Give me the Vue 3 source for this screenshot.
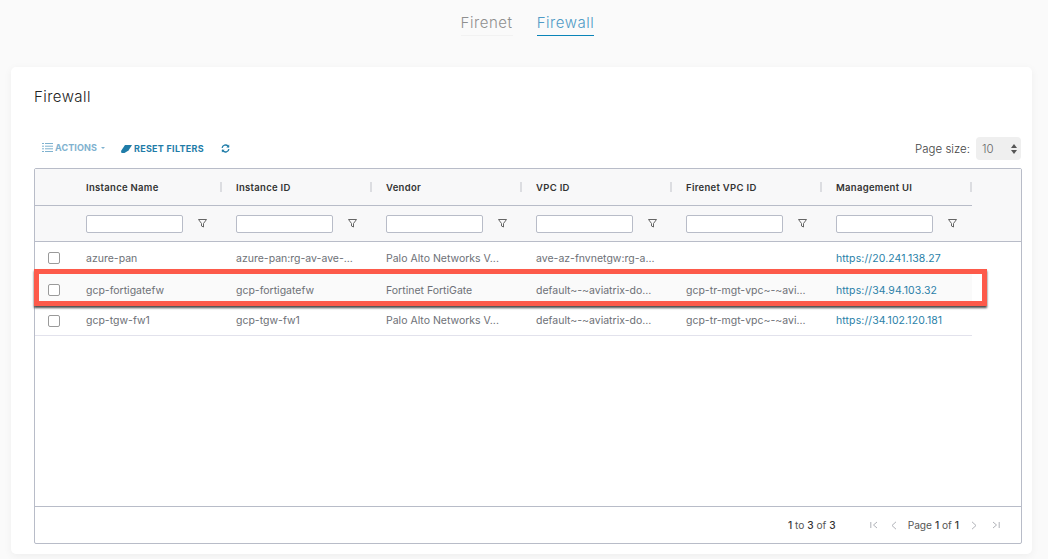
<script setup>
const columns = ['Instance Name', 'Instance ID', 'Vendor', 'VPC ID', 'Firenet VPC ID', 'Management UI']
const rows = [
  { name: 'azure-pan', id: 'azure-pan:rg-av-ave-...', vendor: 'Palo Alto Networks V...', vpc: 'ave-az-fnvnetgw:rg-a...', firenet: '', url: 'https://20.241.138.27' },
  { name: 'gcp-fortigatefw', id: 'gcp-fortigatefw', vendor: 'Fortinet FortiGate', vpc: 'default~-~aviatrix-do...', firenet: 'gcp-tr-mgt-vpc~-~avi...', url: 'https://34.94.103.32' },
  { name: 'gcp-tgw-fw1', id: 'gcp-tgw-fw1', vendor: 'Palo Alto Networks V...', vpc: 'default~-~aviatrix-do...', firenet: 'gcp-tr-mgt-vpc~-~avi...', url: 'https://34.102.120.181' }
]
</script>

<template>
  <div class="page">
    <nav class="tabs">
      <a class="tab">Firenet</a>
      <a class="tab active">Firewall</a>
    </nav>
    <section class="card">
      <h1 class="title">Firewall</h1>
      <div class="toolbar">
        <button class="tool muted">
          <svg width="11" height="9" viewBox="0 0 11 9"><path d="M0 .5h2M3 .5h8M0 3.200h2M3 3.200h8M0 5.800h2M3 5.800h8M0 8.500h2M3 8.500h8" stroke="currentColor" fill="none"/></svg>
          ACTIONS
          <span class="caret"></span>
        </button>
        <button class="tool reset">
          <svg width="11" height="8" viewBox="0 0 11 8"><path d="M4 0h7L7.500 5.500 3.500 8H.5L0 6z" fill="currentColor"/></svg>
          RESET FILTERS
        </button>
        <button class="tool refresh" aria-label="Refresh">
          <svg width="9" height="9" viewBox="0 0 16 16" fill="none" stroke="currentColor" stroke-width="2.400"><path d="M2 7a6 6 0 0 1 10.500-3L14 5.500"/><path d="M14.500 1v5h-5" fill="currentColor" stroke="none"/><path d="M14 9a6 6 0 0 1-10.500 3L2 10.500"/><path d="M1.500 15v-5h5" fill="currentColor" stroke="none"/></svg>
        </button>
        <div class="page-size">
          <span>Page size:</span>
          <div class="select">
            <span>10</span>
            <svg width="6" height="10" viewBox="0 0 6 10"><path d="M3 0l3 4H0zM3 10L0 6h6z" fill="#555"/></svg>
          </div>
        </div>
      </div>

      <div class="grid">
        <div class="head-row">
          <div class="row-inner">
            <div class="check-cell"></div>
            <div v-for="c in columns" :key="c" class="head-cell">{{ c }}</div>
          </div>
        </div>
        <div class="filter-row">
          <div class="check-cell"></div>
          <div v-for="c in columns" :key="c" class="filter-cell">
            <input class="filter-input" type="text" :aria-label="c" />
            <svg class="funnel" width="9" height="9" viewBox="0 0 9 9"><path d="M.5.500h8L5.500 4.500V8L3.500 7V4.500z" fill="none" stroke="#555" stroke-width=".9"/></svg>
          </div>
        </div>
        <div class="body">
          <div v-for="(r, i) in rows" :key="r.name" class="row" :class="{ hi: i === 1, last: i === 2 }">
            <div class="check-cell"><span class="check"></span></div>
            <div class="cell">{{ r.name }}</div>
            <div class="cell">{{ r.id }}</div>
            <div class="cell">{{ r.vendor }}</div>
            <div class="cell">{{ r.vpc }}</div>
            <div class="cell">{{ r.firenet }}</div>
            <div class="cell link">{{ r.url }}</div>
          </div>
        </div>
        <div class="footer">
          <span class="count"><b>1</b> to <b>3</b> of <b>3</b></span>
          <div class="pager">
            <svg width="8" height="8" viewBox="0 0 8 8" fill="none" stroke="#b0b2b8"><path d="M.8 1v6M7 1L3.500 4 7 7"/></svg>
            <svg class="prev" width="6" height="9" viewBox="0 0 6 9" fill="none" stroke="#b0b2b8"><path d="M5 .800L1 4.500 5 8.200"/></svg>
            <span class="pg-text">Page <b>1</b> of <b>1</b></span>
            <svg class="next" width="6" height="9" viewBox="0 0 6 9" fill="none" stroke="#b0b2b8"><path d="M1 .800L5 4.500 1 8.200"/></svg>
            <svg width="8" height="8" viewBox="0 0 8 8" fill="none" stroke="#b0b2b8"><path d="M7.200 1v6M1 1l3.500 3L1 7"/></svg>
          </div>
        </div>
        <div class="callout"></div>
      </div>
    </section>
  </div>
</template>

<style scoped>
.page {
  height: 559px;
  box-sizing: border-box;
  background: #fafafa;
  padding: 15px 16px 5px 11px;
  font-family: Inter, "Liberation Sans", sans-serif;
  overflow: hidden;
}
.tabs {
  display: flex;
  justify-content: center;
  gap: 24px;
  height: 52px;
  padding-left: 12px;
}
.tab {
  height: 19.500px;
  font-size: 15px;
  line-height: 16px;
  font-weight: 300;
  color: #8f8f8f;
  border-bottom: 1px solid #f2f2f2;
  letter-spacing: .55px;
}
.tab.active {
  color: #4f9bc6;
  border-bottom-color: #0a84b8;
}
.card {
  height: 487px;
  box-sizing: border-box;
  background: #fff;
  border-radius: 5px;
  box-shadow: 0 2px 8px rgba(0, 0, 0, .05);
  padding: 21px 10px 0 23px;
}
.title {
  margin: 0;
  height: 18px;
  font-size: 15px;
  line-height: 18px;
  font-weight: 300;
  color: #222;
  letter-spacing: .45px;
}
.toolbar {
  display: flex;
  align-items: center;
  margin-top: 27px;
  margin-bottom: 4px;
  height: 31px;
  padding-left: 8px;
}
.tool {
  display: flex;
  align-items: center;
  gap: 2px;
  border: 0;
  background: none;
  padding: 0;
  font-family: inherit;
  font-weight: 700;
  font-size: 9px;
  letter-spacing: .1px;
}
.muted {
  color: #7fb2cf;
  width: 79px;
  margin-top: -2px;
}
.caret {
  width: 0;
  height: 0;
  margin-left: 2px;
  border: 2px solid transparent;
  border-top-color: #7fb2cf;
  border-bottom: 0;
}
.reset {
  color: #1f7ca8;
  width: 100px;
  gap: 2px;
  letter-spacing: .28px;
}
.refresh {
  color: #1f7ca8;
}
.page-size {
  margin-left: auto;
  display: flex;
  align-items: center;
  gap: 6px;
  font-size: 11.500px;
  font-weight: 300;
  color: #444;
  margin-right: 1px;
}
.select {
  width: 45px;
  height: 23px;
  box-sizing: border-box;
  border-radius: 4px;
  background: #efefef;
  display: flex;
  align-items: center;
  justify-content: space-between;
  padding: 0 4px 0 6px;
  color: #666;
  font-size: 11.500px;
}
.grid {
  position: relative;
  height: 376px;
  box-sizing: border-box;
  border: 1px solid #b8bcc8;
  border-radius: 2px;
  display: flex;
  flex-direction: column;
}
.head-row {
  height: 37px;
  flex: none;
  background: #f8f8f9;
}
.row-inner {
  width: 937px;
  height: 37px;
  box-sizing: border-box;
  border-bottom: 1px solid #b8bcc8;
  display: flex;
}
.check-cell {
  width: 37px;
  flex: none;
  display: flex;
  align-items: center;
  justify-content: center;
  box-sizing: border-box;
}
.head-cell {
  position: relative;
  width: 150px;
  flex: none;
  box-sizing: border-box;
  padding-left: 14px;
  line-height: 37px;
  font-size: 9.500px;
  font-weight: 600;
  letter-spacing: .3px;
  color: #333;
}
.head-cell::after {
  content: "";
  position: absolute;
  right: 0;
  top: 13px;
  width: 2px;
  height: 10px;
  background: #dcdde1;
}
.filter-row {
  height: 36px;
  flex: none;
  display: flex;
  box-sizing: border-box;
  background: #f8f8f9;
  border-bottom: 1px solid #b8bcc8;
}
.filter-cell {
  width: 150px;
  flex: none;
  box-sizing: border-box;
  padding-left: 14px;
  display: flex;
  align-items: center;
}
.filter-input {
  width: 97px;
  height: 18px;
  box-sizing: border-box;
  border: 1px solid #b8bcc8;
  border-radius: 2px;
  background: #fff;
  padding: 0;
  margin: 0;
}
.funnel {
  margin-left: 15px;
}
.body {
  flex: 1;
  min-height: 0;
  padding-top: .6px;
  border-bottom: 1px solid #b8bcc8;
}
.row {
  width: 937px;
  height: 31.700px;
  display: flex;
  align-items: center;
  font-size: 10.500px;
  color: #6d7076;
}
.row.hi {
  background: #fafafa;
}
.row.last {
  height: 30px;
  box-sizing: border-box;
  padding-top: 1px;
  border-bottom: 1px solid #e2e2ec;
}
.check {
  width: 12px;
  height: 12px;
  box-sizing: border-box;
  border: 1.500px solid #9a9a9a;
  border-radius: 2px;
  background: #fff;
}
.cell {
  width: 150px;
  flex: none;
  box-sizing: border-box;
  padding-left: 14px;
  white-space: nowrap;
}
.link {
  color: #2a7fa8;
  letter-spacing: .1px;
}
.footer {
  height: 36px;
  flex: none;
  display: flex;
  align-items: center;
  justify-content: flex-end;
  padding-right: 21px;
  font-size: 10.200px;
  color: #555;
}
.footer b {
  font-weight: 500;
  color: #333;
}
.count {
  margin-right: 34px;
}
.pager {
  display: flex;
  align-items: center;
}
.prev {
  margin-left: 13px;
}
.pg-text {
  margin: 0 12px 0 11px;
}
.next {
  margin-right: 15px;
}
.callout {
  position: absolute;
  left: -1px;
  top: 100px;
  width: 953px;
  height: 37px;
  box-sizing: border-box;
  border: 5px solid #fd5a4a;
  box-shadow: 0 2px 2px rgba(0, 0, 0, .7);
  pointer-events: none;
}
</style>
